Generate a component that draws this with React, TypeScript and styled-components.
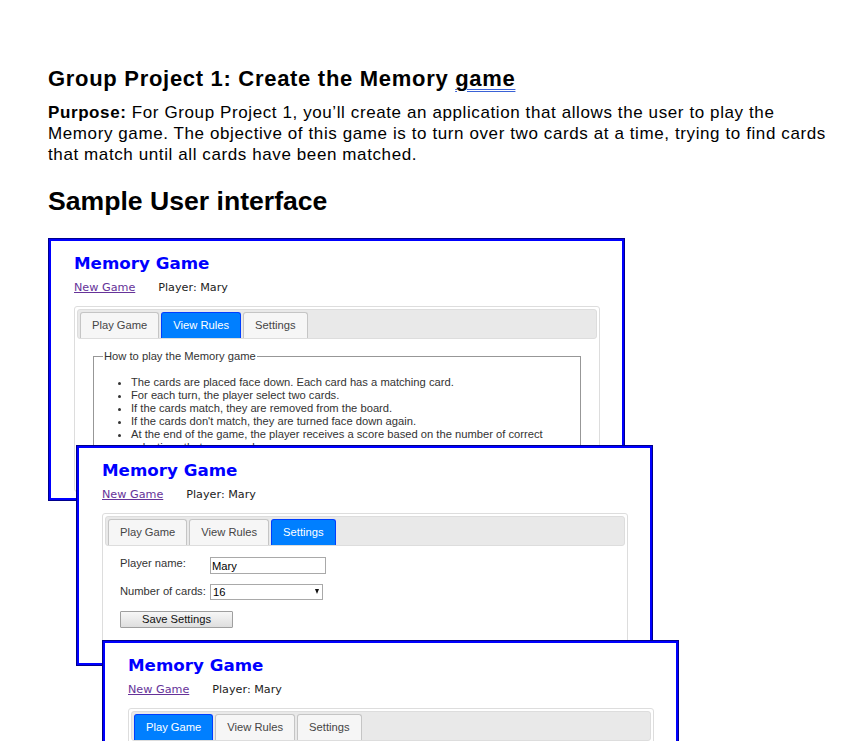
import styled, { createGlobalStyle } from 'styled-components';

const GlobalStyle = createGlobalStyle`
  html, body {
    margin: 0;
    padding: 0;
    background: #fff;
    overflow: hidden;
  }
  body {
    font-family: "Liberation Sans", Arial, sans-serif;
    color: #000;
  }
`;

const Doc = styled.div`
  padding: 66px 0 0 48px;
`;

const DocTitle = styled.h1`
  margin: 0;
  font-size: 22px;
  line-height: 26px;
  font-weight: bold;
  letter-spacing: 0.7px;
`;

const Squiggle = styled.span`
  text-decoration: underline double #3a62d6;
  text-decoration-thickness: 1px;
  text-underline-offset: 3px;
`;

const Purpose = styled.p`
  margin: 10px 0 0;
  width: 800px;
  font-size: 17px;
  line-height: 21px;
  letter-spacing: 0.6px;
`;

const SectionTitle = styled.h2`
  margin: 21px 0 0;
  font-size: 26.6px;
  line-height: 30px;
  font-weight: bold;
`;

// free canvas holding the overlapping app screenshots
const Canvas = styled.div`
  position: relative;
  margin-top: 22px;
  height: 503px;
`;

const Frame = styled.div<{ $top: number; $left: number; $height: number }>`
  position: absolute;
  top: ${(p) => p.$top}px;
  left: ${(p) => p.$left}px;
  width: 577px;
  height: ${(p) => p.$height}px;
  box-sizing: border-box;
  padding: 13px 24px 0 25px;
  background: #fff;
  border: 1px solid #00008b;
  box-shadow: inset 0 0 0 2px #0000ff;
  overflow: hidden;
`;

const AppTitle = styled.h3`
  margin: 0;
  font-family: "DejaVu Sans", Verdana, sans-serif;
  font-size: 16.7px;
  line-height: 22px;
  font-weight: bold;
  color: #0000ff;
`;

const TopBar = styled.div`
  display: flex;
  gap: 23px;
  margin-top: 7px;
  font-family: "DejaVu Sans", Verdana, sans-serif;
  font-size: 11.2px;
  line-height: 14px;
  color: #222;
`;

const NewGameLink = styled.a`
  color: #663399;
  text-decoration: underline;
`;

const TabsBox = styled.div`
  margin-top: 11px;
  padding: 2px;
  background: #fff;
  border: 1px solid #ddd;
  border-radius: 3px;
  font-family: "Liberation Sans", Arial, sans-serif;
  font-size: 11.2px;
`;

const TabNav = styled.div`
  display: flex;
  gap: 2px;
  padding: 2px 2px 0;
  background: #e9e9e9;
  border: 1px solid #ddd;
  border-radius: 3px;
`;

const Tab = styled.div<{ $active?: boolean }>`
  padding: 5px 11px 6px;
  line-height: 14px;
  border: 1px solid ${(p) => (p.$active ? '#003eff' : '#c5c5c5')};
  border-bottom: none;
  border-radius: 3px 3px 0 0;
  background: ${(p) => (p.$active ? '#007fff' : '#f6f6f6')};
  color: ${(p) => (p.$active ? '#fff' : '#454545')};
`;

const Panel = styled.div`
  padding: 10px 15px 14px;
  color: #333;
`;

const RulesSet = styled.fieldset`
  margin: 0 1px;
  padding: 0 9px 8px;
  border: 1px solid #979797;
`;

const RulesLegend = styled.legend`
  padding: 0 1px;
  line-height: 14px;
  color: #333;
`;

const RulesList = styled.ul`
  margin: 13px 0 12px;
  padding-left: 28px;
  line-height: 13px;
  color: #333;
`;

const SettingsGrid = styled.div`
  display: grid;
  grid-template-columns: 90px auto;
  row-gap: 10px;
  align-items: start;
  line-height: 14px;
`;

const FieldLabel = styled.label`
  color: #333;
`;

const TextInput = styled.input`
  box-sizing: border-box;
  width: 116px;
  height: 17px;
  margin: 1px 0 0;
  padding: 0 1px;
  border: 1px solid #a9a9a9;
  font-family: "Liberation Sans", Arial, sans-serif;
  font-size: 11.2px;
  color: #000;
  outline: none;
`;

const SelectWrap = styled.div`
  position: relative;
  width: 113px;
`;

const Select = styled.select`
  box-sizing: border-box;
  display: block;
  width: 113px;
  height: 16px;
  margin: 0;
  padding: 0 0 0 2px;
  border: 1px solid #a9a9a9;
  border-radius: 0;
  appearance: none;
  background: #fff;
  font-family: "Liberation Sans", Arial, sans-serif;
  font-size: 11.2px;
  color: #000;
`;

const Caret = styled.span`
  position: absolute;
  right: 4px;
  top: 5px;
  width: 0;
  height: 0;
  border-left: 2.5px solid transparent;
  border-right: 2.5px solid transparent;
  border-top: 5px solid #111;
  pointer-events: none;
`;

const SaveButton = styled.button`
  box-sizing: border-box;
  display: block;
  width: 113px;
  height: 17px;
  margin-top: 11px;
  padding: 0;
  border: 1px solid #9f9f9f;
  border-radius: 1px;
  background: linear-gradient(#f7f7f7, #dedede);
  font-family: "Liberation Sans", Arial, sans-serif;
  font-size: 11.2px;
  line-height: 15px;
  color: #111;
`;

const tabNames = ['Play Game', 'View Rules', 'Settings'];

const rules = [
  'The cards are placed face down. Each card has a matching card.',
  'For each turn, the player select two cards.',
  'If the cards match, they are removed from the board.',
  "If the cards don't match, they are turned face down again.",
  'At the end of the game, the player receives a score based on the number of correct selections that were made.',
];

const AppShot = ({ active, children, top, left, height }: {
  active: string;
  children?: React.ReactNode;
  top: number;
  left: number;
  height: number;
}) => (
  <Frame $top={top} $left={left} $height={height}>
    <AppTitle>Memory Game</AppTitle>
    <TopBar>
      <NewGameLink href="#">New Game</NewGameLink>
      <span>Player: Mary</span>
    </TopBar>
    <TabsBox>
      <TabNav>
        {tabNames.map((name) => (
          <Tab key={name} $active={name === active}>{name}</Tab>
        ))}
      </TabNav>
      <Panel>{children}</Panel>
    </TabsBox>
  </Frame>
);

const App = () => (
  <>
    <GlobalStyle/>
    <Doc>
      <DocTitle>Group Project 1: Create the Memory <Squiggle>game</Squiggle></DocTitle>
      <Purpose>
        <b>Purpose:</b>{' '}For Group Project 1, you’ll create an application that allows the user to play the<br/>
        Memory game. The objective of this game is to turn over two cards at a time, trying to find cards<br/>
        that match until all cards have been matched.
      </Purpose>
      <SectionTitle>Sample User interface</SectionTitle>
      <Canvas>
        <AppShot active="View Rules" top={0} left={0} height={263}>
          <RulesSet>
            <RulesLegend>How to play the Memory game</RulesLegend>
            <RulesList>
              {rules.map((r) => <li key={r}>{r}</li>)}
            </RulesList>
          </RulesSet>
        </AppShot>
        <AppShot active="Settings" top={207} left={28} height={221}>
          <SettingsGrid>
            <FieldLabel>Player name:</FieldLabel>
            <TextInput defaultValue="Mary"/>
            <FieldLabel>Number of cards:</FieldLabel>
            <SelectWrap>
              <Select defaultValue="16">
                <option>8</option>
                <option>16</option>
                <option>24</option>
              </Select>
              <Caret/>
            </SelectWrap>
          </SettingsGrid>
          <SaveButton type="button">Save Settings</SaveButton>
        </AppShot>
        <AppShot active="Play Game" top={402} left={54} height={280}/>
      </Canvas>
    </Doc>
  </>
);

export default App;
